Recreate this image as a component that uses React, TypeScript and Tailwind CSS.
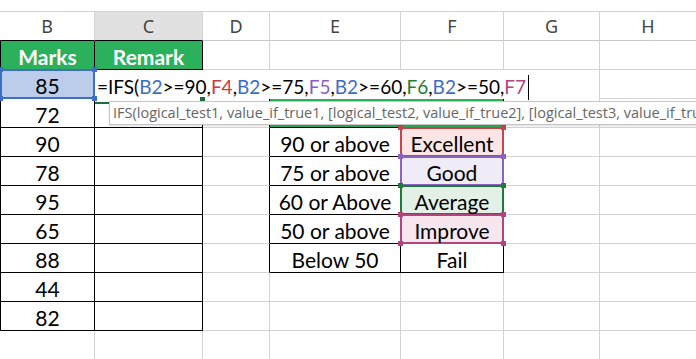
import type { ReactNode } from "react";

const GRID = "grid grid-cols-[95px_108px_67px_131px_103px_96px_97px]";
const CELL_FONT = "font-['Lato',sans-serif]";

type Tone = { fill: string; border: string; handle: string };

const BLUE: Tone = { fill: "bg-[#bccdec]", border: "border-[#3f6fc4]", handle: "bg-[#3f6fc4]" };
const RED: Tone = { fill: "bg-[#fbe5e5]", border: "border-[#c4464c]", handle: "bg-[#c4464c]" };
const PURPLE: Tone = { fill: "bg-[#efebf7]", border: "border-[#8a62c0]", handle: "bg-[#8a62c0]" };
const GREEN: Tone = { fill: "bg-[#e3f0e5]", border: "border-[#207a3b]", handle: "bg-[#207a3b]" };
const PINK: Tone = { fill: "bg-[#f7e6ee]", border: "border-[#b3457e]", handle: "bg-[#b3457e]" };

// B1:C10 and E3:F8 have black borders
function inTable(r: number, c: number) {
  if ((c === 0 || c === 1) && r >= 1 && r <= 10) return true;
  if ((c === 3 || c === 4) && r >= 3 && r <= 8) return true;
  return false;
}

function Highlight({ tone }: { tone: Tone }) {
  return (
    <>
      <div className={`absolute inset-0 z-[1] ${tone.fill}`} />
      <div className={`absolute -inset-px z-[1] border-2 ${tone.border}`} />
      <div className={`absolute -left-[3px] -top-[3px] z-[1] size-[5px] ${tone.handle}`} />
      <div className={`absolute -right-[3px] -top-[3px] z-[1] size-[5px] ${tone.handle}`} />
      <div className={`absolute -left-[3px] -bottom-[3px] z-[1] size-[5px] ${tone.handle}`} />
      <div className={`absolute -right-[3px] -bottom-[3px] z-[1] size-[5px] ${tone.handle}`} />
    </>
  );
}

type CellProps = {
  r: number;
  c: number;
  children?: ReactNode;
  className?: string;
  tone?: Tone;
};

function Cell({ r, c, children, className = "", tone }: CellProps) {
  const right = inTable(r, c) || inTable(r, c + 1) ? "border-r-black" : "border-r-[#d4d4d4]";
  const bottom = inTable(r, c) || inTable(r + 1, c) ? "border-b-black" : "border-b-[#d4d4d4]";
  const left = c === 0 && inTable(r, 0) ? "border-l border-l-black" : "";
  return (
    <div className={`relative flex items-center justify-center border-r border-b ${right} ${bottom} ${left} ${className}`}>
      {tone && <Highlight tone={tone} />}
      <span className="relative z-[2] pt-[3px]">{children}</span>
    </div>
  );
}

const marks = ["85", "72", "90", "78", "95", "65", "88", "44", "82"];
const ranges = ["90 or above", "75 or above", "60 or Above", "50 or above", "Below 50"];
const grades: [string, Tone | undefined][] = [
  ["Excellent", RED],
  ["Good", PURPLE],
  ["Average", GREEN],
  ["Improve", PINK],
  ["Fail", undefined],
];

function Formula() {
  return (
    <div className="relative col-span-5 flex flex-col border-r border-r-[#d4d4d4] bg-white">
      <div className={`flex flex-1 items-center whitespace-nowrap pl-[2px] pt-[3px] text-[19px] text-black ${CELL_FONT}`}>
        <span>=IFS(</span>
        <span className="text-[#3a6cc6]">B2</span>
        <span>&gt;=90,</span>
        <span className="text-[#cc3b3f]">F4</span>
        <span>,</span>
        <span className="text-[#3a6cc6]">B2</span>
        <span>&gt;=75,</span>
        <span className="text-[#8a5cc6]">F5</span>
        <span>,</span>
        <span className="text-[#3a6cc6]">B2</span>
        <span>&gt;=60,</span>
        <span className="text-[#1e7d32]">F6</span>
        <span>,</span>
        <span className="text-[#3a6cc6]">B2</span>
        <span>&gt;=50,</span>
        <span className="text-[#b2447e]">F7</span>
        <span className="ml-[2px] h-[25px] w-px bg-black" />
      </div>
      <div className="flex h-[2px] items-end">
        <div className="h-[2px] w-[108px] bg-[#1d6b40]" />
        <div className="h-px w-[67px] bg-[#d4d4d4]" />
        <div className="h-px w-[234px] bg-[#2bb15c]" />
        <div className="h-px w-[95px] bg-[#d4d4d4]" />
      </div>
      <div className="absolute -bottom-[3px] left-[105px] z-[3] size-[5px] bg-[#1d6b40]" />
    </div>
  );
}

export default function App() {
  const rows: ReactNode[] = [];
  for (let r = 1; r <= 11; r++) {
    for (let c = 0; c < 7; c++) {
      if (r === 2 && c >= 2 && c <= 5) continue;
      if (r === 3 && c === 4) continue;
      const key = `${r}-${c}`;
      if (r === 1 && c === 0) {
        rows.push(<Cell key={key} r={r} c={c} className="bg-[#2bb15c] font-bold text-white">Marks</Cell>);
      } else if (r === 1 && c === 1) {
        rows.push(<Cell key={key} r={r} c={c} className="bg-[#2bb15c] font-bold text-white">Remark</Cell>);
      } else if (c === 0 && r >= 2 && r <= 10) {
        rows.push(<Cell key={key} r={r} c={c} tone={r === 2 ? BLUE : undefined}>{marks[r - 2]}</Cell>);
      } else if (r === 2 && c === 1) {
        rows.push(<Formula key={key} />);
      } else if (r === 3 && c === 3) {
        rows.push(<Cell key={key} r={r} c={c} className="col-span-2 bg-[#2bb15c]" />);
      } else if (c === 3 && r >= 4 && r <= 8) {
        rows.push(<Cell key={key} r={r} c={c}>{ranges[r - 4]}</Cell>);
      } else if (c === 4 && r >= 4 && r <= 8) {
        const [label, tone] = grades[r - 4];
        rows.push(<Cell key={key} r={r} c={c} tone={tone}>{label}</Cell>);
      } else {
        rows.push(<Cell key={key} r={r} c={c} />);
      }
    }
  }

  return (
    <div className="relative h-[359px] w-[696px] overflow-hidden bg-white">
      <div className="h-[12px] border-b border-[#d4d4d4]" />
      <div className={`${GRID} h-[29px] font-['Noto_Sans',sans-serif] text-[18px] text-[#444]`}>
        {["B", "C", "D", "E", "F", "G", "H"].map((l, i) => (
          <div
            key={l}
            className={`flex items-center justify-center border-b border-r border-r-[#d4d4d4] ${
              i < 2 ? "border-b-black" : "border-b-[#c8c8c8]"
            } ${i === 1 ? "bg-[#e1e1e1]" : "bg-white"}`}
          >
            {l}
          </div>
        ))}
      </div>
      <div className={`${GRID} auto-rows-[29px] text-[21px] text-black ${CELL_FONT}`}>{rows}</div>

      <div className="absolute left-[109px] top-[101px] z-[5] flex h-[24px] w-[700px] items-center whitespace-nowrap border border-[#c6c6c6] bg-white pl-[3px] font-['Open_Sans',sans-serif] text-[14.5px] text-[#666] shadow-[0_1px_2px_rgba(0,0,0,0.15)]">
        IFS(logical_test1, value_if_true1, [logical_test2, value_if_true2], [logical_test3, value_if_tru
      </div>
    </div>
  );
}
